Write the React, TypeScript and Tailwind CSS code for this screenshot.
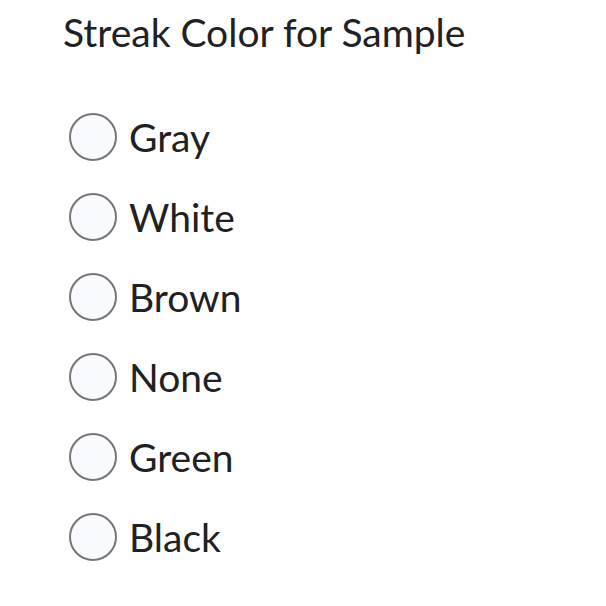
import React from 'react';

const options = ['Gray', 'White', 'Brown', 'None', 'Green', 'Black'];

const App: React.FC = () => {
  return (
    <div className="min-h-screen bg-white pl-[63px] pt-[8px] font-['Lato',sans-serif] text-[#202122]">
      <fieldset>
        <legend className="text-[39px] leading-[48px]">Streak Color for Sample</legend>
        <div className="mt-[57px] flex flex-col gap-[32px] pl-[6px]">
          {options.map((opt) => (
            <label key={opt} className="flex items-center gap-[12px] h-[48px]">
              <input
                type="radio"
                name="streak"
                className="appearance-none w-[48px] h-[48px] rounded-full border-2 border-[#767676] bg-[#f9fbff] shrink-0"
              />
              <span className="text-[39px] leading-[48px]">{opt}</span>
            </label>
          ))}
        </div>
      </fieldset>
    </div>
  );
};

export default App;
